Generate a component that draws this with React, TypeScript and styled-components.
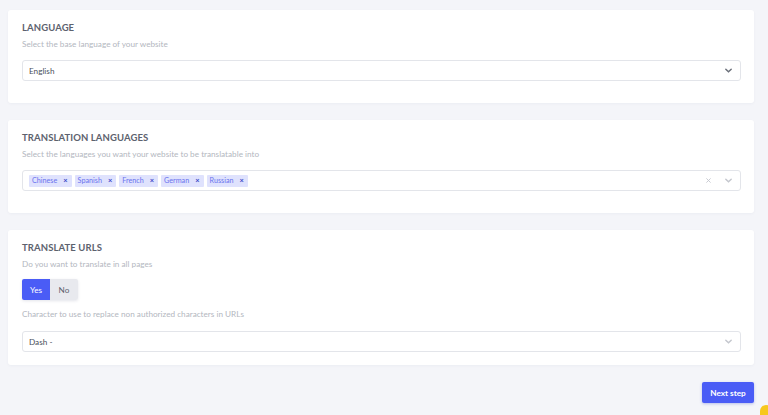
import React from 'react';
import styled, { createGlobalStyle } from 'styled-components';

const GlobalStyle = createGlobalStyle`
  html, body {
    margin: 0;
    padding: 0;
    background: #f4f5f9;
    font-family: Lato, "Open Sans", "Liberation Sans", sans-serif;
  }
`;

const Page = styled.div`
  box-sizing: border-box;
  width: 768px;
  height: 415px;
  padding: 10px 14px 0 8px;
  display: flex;
  flex-direction: column;
  gap: 17px;
  overflow: hidden;
  position: relative;
`;

const Card = styled.section<{ bottom: number }>`
  background: #ffffff;
  border-radius: 3px;
  box-shadow: 0 1px 3px rgba(30, 40, 90, 0.04);
  padding: 12px 13px ${({ bottom }) => `${bottom}px`} 14px;
  display: flex;
  flex-direction: column;
`;

const Title = styled.h2`
  margin: 0;
  font-size: 9.5px;
  line-height: 12px;
  font-weight: 700;
  color: #5d626e;
  letter-spacing: 0.1px;
`;

const Hint = styled.p<{ gap: number }>`
  margin: ${({ gap }) => `${gap}px`} 0 0;
  font-size: 8.2px;
  line-height: 10px;
  color: #b3b7c0;
`;

const SelectBox = styled.div<{ gap: number }>`
  box-sizing: border-box;
  margin-top: ${({ gap }) => `${gap}px`};
  height: 21px;
  border: 1px solid #e3e5ea;
  border-radius: 3px;
  background: #fff;
  display: flex;
  align-items: center;
  padding: 0 6px 0 6px;
  gap: 3px;
`;

const Value = styled.span`
  flex: 1;
  font-size: 8.2px;
  color: #4a4f5a;
`;

const Tags = styled.div`
  flex: 1;
  display: flex;
  gap: 3px;
`;

const Tag = styled.span`
  display: inline-flex;
  align-items: center;
  gap: 6px;
  height: 12px;
  padding: 0 4px 0 3px;
  background: #dfe2fd;
  border-radius: 1px;
  font-size: 7.2px;
  color: #6a73ee;
`;

const TagX = styled.span`
  font-size: 7.5px;
  font-weight: 700;
  color: #3d47c8;
  line-height: 1;
`;

const IconSlot = styled.span`
  display: inline-flex;
  align-items: center;
  justify-content: center;
  width: 12px;
  height: 12px;
`;

const Toggle = styled.div`
  margin-top: 10px;
  display: flex;
  align-self: flex-start;
  box-shadow: 0 1px 3px rgba(30, 40, 90, 0.12);
  border-radius: 2px;
  overflow: hidden;
`;

const ToggleButton = styled.button<{ active: boolean }>`
  width: 28px;
  height: 21px;
  border: none;
  padding: 0;
  font-family: inherit;
  font-size: 8.2px;
  background: ${({ active }) => (active ? '#4a5cf6' : '#e8e9ee')};
  color: ${({ active }) => (active ? '#ffffff' : '#5d626e')};
`;

const Footer = styled.div`
  display: flex;
  justify-content: flex-end;
`;

const NextButton = styled.button`
  width: 52px;
  height: 21px;
  border: none;
  border-radius: 2px;
  background: #4a5cf6;
  color: #fff;
  font-family: inherit;
  font-size: 8.2px;
  font-weight: 700;
  box-shadow: 0 1px 3px rgba(40, 60, 200, 0.3);
`;

const Widget = styled.div`
  position: absolute;
  right: -4px;
  bottom: -6px;
  width: 12px;
  height: 16px;
  border-radius: 6px;
  background: #f7c81e;
`;

const Chevron = ({ color }: { color: string }) => (
  <svg width="9" height="9" viewBox="0 0 10 10">
    <path d="M2 3.5 L5 6.5 L8 3.5" fill="none" stroke={color} strokeWidth="1.6" strokeLinecap="round" />
  </svg>
);

const Cross = () => (
  <svg width="7" height="7" viewBox="0 0 10 10">
    <path d="M2 2 L8 8 M8 2 L2 8" fill="none" stroke="#c4c7ce" strokeWidth="1.3" />
  </svg>
);

const languages = ['Chinese', 'Spanish', 'French', 'German', 'Russian'];

const App = () => (
  <>
    <GlobalStyle />
    <Page>
      <Card bottom={22}>
        <Title>LANGUAGE</Title>
        <Hint gap={5}>Select the base language of your website</Hint>
        <SelectBox gap={11}>
          <Value>English</Value>
          <IconSlot>
            <Chevron color="#6b707a" />
          </IconSlot>
        </SelectBox>
      </Card>

      <Card bottom={22}>
        <Title>TRANSLATION LANGUAGES</Title>
        <Hint gap={5}>Select the languages you want your website to be translatable into</Hint>
        <SelectBox gap={11}>
          <Tags>
            {languages.map((lang) => (
              <Tag key={lang}>
                {lang}
                <TagX>×</TagX>
              </Tag>
            ))}
          </Tags>
          <IconSlot>
            <Cross />
          </IconSlot>
          <IconSlot style={{ marginLeft: 5 }}>
            <Chevron color="#c4c7ce" />
          </IconSlot>
        </SelectBox>
      </Card>

      <Card bottom={13}>
        <Title>TRANSLATE URLS</Title>
        <Hint gap={5}>Do you want to translate in all pages</Hint>
        <Toggle>
          <ToggleButton active>Yes</ToggleButton>
          <ToggleButton active={false}>No</ToggleButton>
        </Toggle>
        <Hint gap={9}>Character to use to replace non authorized characters in URLs</Hint>
        <SelectBox gap={12}>
          <Value>Dash -</Value>
          <IconSlot>
            <Chevron color="#c4c7ce" />
          </IconSlot>
        </SelectBox>
      </Card>

      <Footer>
        <NextButton>Next step</NextButton>
      </Footer>
      <Widget />
    </Page>
  </>
);

export default App;
